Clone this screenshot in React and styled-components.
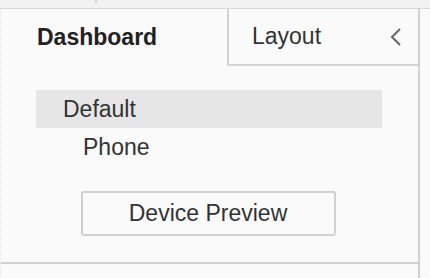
import styled, { createGlobalStyle } from 'styled-components';

const GlobalStyle = createGlobalStyle`
  html, body {
    margin: 0;
    padding: 0;
    background: #fafafa;
  }
  body {
    font-family: "Liberation Sans", Arial, sans-serif;
  }
`;

const Page = styled.div`
  width: 430px;
  height: 278px;
  overflow: hidden;
  display: flex;
  flex-direction: column;
  background: #fafafa;
`;

const TopStrip = styled.div`
  height: 8px;
  flex-shrink: 0;
  background: #f2f2f2;
  border-bottom: 1px solid #dadada;
  display: flex;
`;

const Tick = styled.div`
  width: 95px;
  height: 3px;
  border-right: 2px solid #d4d4d4;
`;

const Body = styled.div`
  flex: 1;
  display: flex;
`;

const Panel = styled.div`
  width: 420px;
  border-right: 2px solid #d2d2d2;
  border-left: 1px dotted #e6e6e6;
  box-sizing: border-box;
  display: flex;
  flex-direction: column;
`;

const Tabs = styled.div`
  display: flex;
  height: 57px;
`;

const Tab = styled.div`
  display: flex;
  align-items: center;
  box-sizing: border-box;
  font-size: 23px;
  color: ${({ active }) => (active ? '#222' : '#333')};
  font-weight: ${({ active }) => (active ? 700 : 400)};
  padding-left: ${({ active }) => (active ? '36px' : '23px')};
  padding-right: 16px;
  width: ${({ active }) => (active ? '226px' : 'auto')};
  flex: ${({ active }) => (active ? 'none' : '1')};
  border-left: ${({ active }) => (active ? 'none' : '2px solid #d4d4d4')};
  border-bottom: ${({ active }) => (active ? 'none' : '2px solid #d4d4d4')};
`;

const TabLabel = styled.span`
  flex: 1;
`;

const Chevron = styled.svg`
  width: 12px;
  height: 20px;
`;

const List = styled.div`
  display: flex;
  flex-direction: column;
  margin: 24px 36px 0 35px;
`;

const Row = styled.div`
  height: 38px;
  display: flex;
  align-items: center;
  font-size: 23px;
  color: #333;
  padding-left: ${({ level }) => 27 + level * 20}px;
  background: ${({ selected }) => (selected ? '#e6e6e6' : 'transparent')};
`;

const ButtonWrap = styled.div`
  display: flex;
  justify-content: center;
  padding: 25px 0 26px;
  border-bottom: 2px solid #d2d2d2;
`;

const Button = styled.button`
  width: 255px;
  height: 45px;
  box-sizing: border-box;
  border: 2px solid #d0d0d0;
  border-radius: 3px;
  background: #fafafa;
  font-family: "Liberation Sans", Arial, sans-serif;
  font-size: 23px;
  color: #333;
  padding: 0;
  margin-left: -3px;
`;

export default function App() {
  return (
    <Page>
      <GlobalStyle />
      <TopStrip>
        <Tick />
      </TopStrip>
      <Body>
        <Panel>
          <Tabs>
            <Tab active>Dashboard</Tab>
            <Tab>
              <TabLabel>Layout</TabLabel>
              <Chevron viewBox="0 0 12 20">
                <path d="M10 2 L2 10 L10 18" fill="none" stroke="#666" strokeWidth="2" />
              </Chevron>
            </Tab>
          </Tabs>
          <List>
            <Row level={0} selected>Default</Row>
            <Row level={1}>Phone</Row>
          </List>
          <ButtonWrap>
            <Button>Device Preview</Button>
          </ButtonWrap>
        </Panel>
      </Body>
    </Page>
  );
}
